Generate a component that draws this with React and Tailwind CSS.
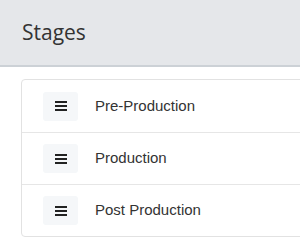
import React from "react";

const stages = ["Pre-Production", "Production", "Post Production"];

const Hamburger = () => (
  <svg width="12" height="10" viewBox="0 0 12 10" fill="#222">
    <rect x="0" y="0" width="12" height="2" />
    <rect x="0" y="4" width="12" height="2" />
    <rect x="0" y="8" width="12" height="2" />
  </svg>
);

export default function App() {
  return (
    <div className="w-[300px] h-[247px] overflow-hidden bg-white">
      <div className="h-[67px] bg-[#e5e7ea] border-b-2 border-[#ccd1d6] flex items-center pl-[22px]">
        <h1 className="text-[21px] text-[#333] font-['Open_Sans',sans-serif] leading-none pb-[1px]">
          Stages
        </h1>
      </div>
      <div className="pl-[21px] pt-[12px]">
        <ul className="w-[300px] border border-[#e2e2e2] rounded-[4px] bg-white">
          {stages.map((s, i) => (
            <li
              key={s}
              className={`h-[52px] flex items-center pl-[21px] ${i > 0 ? "border-t border-[#e6e6e6]" : ""}`}
            >
              <span className="w-[35px] h-[29px] rounded-[3px] bg-[#f5f7f9] flex items-center justify-center">
                <Hamburger />
              </span>
              <span className="ml-[17px] text-[15px] text-[#333] font-['Liberation_Sans',Arial,sans-serif]">
                {s}
              </span>
            </li>
          ))}
        </ul>
      </div>
    </div>
  );
}
